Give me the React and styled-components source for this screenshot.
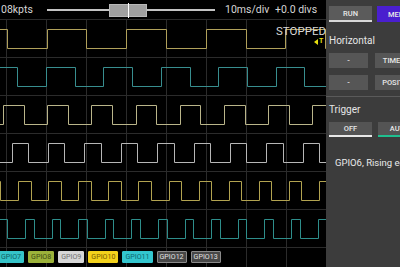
import React from "react";
import styled, { createGlobalStyle } from "styled-components";

const GlobalStyle = createGlobalStyle`
  html, body { margin: 0; padding: 0; background: #000; overflow: hidden; }
  body { font-family: Roboto, "Noto Sans", sans-serif; }
`;

const Screen = styled.div`
  display: flex;
  width: 400px;
  height: 267px;
  background: #000;
  overflow: hidden;
`;

const Scope = styled.div`
  display: flex;
  flex-direction: column;
  width: 326px;
  flex: none;
`;

const TopBar = styled.div`
  display: flex;
  align-items: center;
  height: 19px;
  flex: none;
  color: #d6d6d6;
  font-size: 10.5px;
  white-space: nowrap;
`;

const Info = styled.span`
  flex: none;
  width: ${(p) => p.$w}px;
  padding-left: ${(p) => p.$pl || 0}px;
  box-sizing: border-box;
`;

const Slider = styled.div`
  position: relative;
  flex: none;
  width: 168px;
  height: 19px;
  display: flex;
  align-items: center;
`;

const Track = styled.div`
  width: 100%;
  height: 2px;
  background: #c4c4c4;
`;

const Thumb = styled.div`
  position: absolute;
  left: 62px;
  top: 4px;
  width: 38px;
  height: 13px;
  box-sizing: border-box;
  border: 1px solid #b8b8b8;
  background: #a0a0a0;
  &::after {
    content: "";
    position: absolute;
    left: 18px;
    top: -2px;
    width: 1px;
    height: 15px;
    background: #fff;
  }
`;

const Plot = styled.div`
  position: relative;
  flex: 1;
`;

const Svg = styled.svg`
  display: block;
`;

const Stopped = styled.div`
  position: absolute;
  left: 276px;
  top: 6px;
  font-size: 11.5px;
  line-height: 13px;
  color: #d8d8d8;
`;

const TrigMark = styled.div`
  position: absolute;
  left: 314px;
  top: 19px;
  display: flex;
  align-items: center;
  gap: 1px;
  color: #e8e010;
  font-size: 7px;
  font-weight: 700;
  line-height: 7px;
`;

const Tri = styled.span`
  width: 0;
  height: 0;
  border-top: 3px solid transparent;
  border-bottom: 3px solid transparent;
  border-right: 4px solid #e8e010;
`;

const Labels = styled.div`
  position: absolute;
  left: -2px;
  top: 232px;
  display: flex;
  gap: 4px;
`;

const Chip = styled.div`
  height: 12px;
  box-sizing: border-box;
  padding: 0 2px;
  font-size: 7.1px;
  line-height: 10px;
  border: 1px solid ${(p) => p.$bd};
  background: ${(p) => p.$bg};
  color: ${(p) => p.$fg};
  border-radius: 1px;
  white-space: nowrap;
`;

const Panel = styled.div`
  flex: none;
  width: 74px;
  height: 267px;
  background: #3c3c3c;
  overflow: hidden;
  box-sizing: border-box;
  padding-left: 3px;
  color: #e4e4e4;
`;

const Inner = styled.div`
  width: 110px;
  display: flex;
  flex-direction: column;
`;

const BtnRow = styled.div`
  display: flex;
  gap: ${(p) => p.$gap || 5}px;
  margin-top: ${(p) => p.$mt}px;
`;

const Btn = styled.div`
  flex: none;
  width: ${(p) => p.$w || 43}px;
  height: ${(p) => p.$h || 15}px;
  box-sizing: border-box;
  display: flex;
  align-items: center;
  justify-content: center;
  font-size: 7.5px;
  font-weight: 500;
  color: #e8e8e8;
  white-space: nowrap;
  background: ${(p) => p.$bg || "#565656"};
  border-bottom: ${(p) => (p.$line ? `2px solid ${p.$line}` : "none")};
`;

const Title = styled.div`
  font-size: 10px;
  line-height: 14px;
  margin-top: ${(p) => p.$mt}px;
  color: #e6e6e6;
`;

const Divider = styled.div`
  height: 1px;
  background: #5a5a5a;
  margin: 6px 0 0 -3px;
`;

const TrigInfo = styled.div`
  font-size: 9.5px;
  line-height: 12px;
  margin: 20px 0 0 6px;
  color: #eaeaea;
  white-space: nowrap;
`;

const W = 326;
const H = 248;

function square(rise0, period, high, row) {
  const hy = 10.5 + 38 * row;
  const ly = 29.5 + 38 * row;
  let x = rise0;
  while (x > 0) x -= period;
  let d = `M${x - period + high} ${ly} `;
  for (; x < W + period; x += period) {
    const r = Math.round(x) + 0.5;
    const f = Math.round(x + high) + 0.5;
    d += `L${r} ${ly} L${r} ${hy} L${f} ${hy} L${f} ${ly} `;
  }
  return d;
}

const traces = [
  { rise: 46.5, period: 79.6, high: 39.8, color: "#b0a05a" },
  { rise: 46, period: 57.4, high: 28.7, color: "#388e8f" },
  { rise: 3, period: 44.2, high: 20.5, color: "#bab58a" },
  { rise: 11.5, period: 36.4, high: 16.5, color: "#b6b6b6" },
  { rise: 18, period: 30.1, high: 12.5, color: "#b2a350" },
  { rise: 25, period: 26.6, high: 8.5, color: "#2e8e8b" },
];

const chips = [
  { t: "GPIO7", bg: "#35c3c8", fg: "#0f5f64", bd: "#35c3c8" },
  { t: "GPIO8", bg: "#9cb23a", fg: "#3d4a12", bd: "#9cb23a" },
  { t: "GPIO9", bg: "#d6d6d6", fg: "#707070", bd: "#d6d6d6" },
  { t: "GPIO10", bg: "#f3d21c", fg: "#7a5d00", bd: "#f3d21c" },
  { t: "GPIO11", bg: "#33c6cf", fg: "#0d6870", bd: "#33c6cf" },
  { t: "GPIO12", bg: "#474747", fg: "#e2e2e2", bd: "#8a8a8a" },
  { t: "GPIO13", bg: "#474747", fg: "#e2e2e2", bd: "#8a8a8a" },
];

export default function App() {
  const vlines = [];
  for (let x = 6.5; x <= W + 1; x += 40) vlines.push(x);
  const hlines = [];
  for (let y = 0.5; y < H; y += 38) hlines.push(y);
  return (
    <>
      <GlobalStyle />
      <Screen>
        <Scope>
          <TopBar>
            <Info $w={47} $pl={1}>08kpts</Info>
            <Slider>
              <Track />
              <Thumb />
            </Slider>
            <Info $w={60} $pl={10}>10ms/div</Info>
            <Info $w={51}>+0.0 divs</Info>
          </TopBar>
          <Plot>
            <Svg width={W} height={H} viewBox={`0 0 ${W} ${H}`}>
              {vlines.map((x) => (
                <line key={"v" + x} x1={x} y1={0} x2={x} y2={H} stroke="#2b2b2b" strokeWidth="1" />
              ))}
              {hlines.map((y) => (
                <line key={"h" + y} x1={0} y1={y} x2={W} y2={y} stroke="#2b2b2b" strokeWidth="1" />
              ))}
              {traces.map((t, i) => (
                <path
                  key={i}
                  d={square(t.rise, t.period, t.high, i)}
                  fill="none"
                  stroke={t.color}
                  strokeWidth="1"
                />
              ))}
            </Svg>
            <Stopped>STOPPED</Stopped>
            <TrigMark>
              <Tri />
              <span>T</span>
            </TrigMark>
            <Labels>
              {chips.map((c) => (
                <Chip key={c.t} $bg={c.bg} $fg={c.fg} $bd={c.bd}>
                  {c.t}
                </Chip>
              ))}
            </Labels>
          </Plot>
        </Scope>
        <Panel>
          <Inner>
            <BtnRow $mt={6}>
              <Btn $h={16} $bg="#5b5b5b" $line="#d8d8d8">RUN</Btn>
              <Btn $h={16} $bg="#4a1fcf">MENU</Btn>
            </BtnRow>
            <Title $mt={12}>Horizontal</Title>
            <BtnRow $mt={5} $gap={7}>
              <Btn $w={39}>-</Btn>
              <Btn $w={48}>TIME/DIV</Btn>
            </BtnRow>
            <BtnRow $mt={7} $gap={7}>
              <Btn $w={39}>-</Btn>
              <Btn $w={48}>POSITION</Btn>
            </BtnRow>
            <Divider />
            <Title $mt={6}>Trigger</Title>
            <BtnRow $mt={5} $gap={6}>
              <Btn $bg="#545454" $line="#e8e8e8">OFF</Btn>
              <Btn $bg="#545454" $line="#1fbf8f">AUTO</Btn>
            </BtnRow>
            <TrigInfo>GPIO6, Rising edge</TrigInfo>
          </Inner>
        </Panel>
      </Screen>
    </>
  );
}
